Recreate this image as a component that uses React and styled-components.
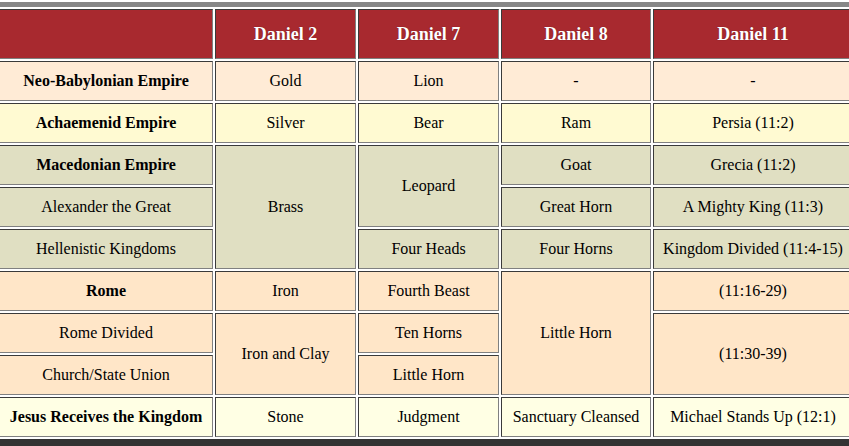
import React from "react";
import styled, { createGlobalStyle } from "styled-components";

const Global = createGlobalStyle`
  html, body { margin: 0; padding: 0; background: #ffffff; overflow: hidden; }
  body { font-family: "Liberation Serif", "Times New Roman", serif; }
`;

const Page = styled.div`
  width: 849px;
  height: 446px;
  overflow: hidden;
`;

const Table = styled.table`
  table-layout: fixed;
  width: 868px;
  margin: 2px 0 0 -8px;
  border-collapse: separate;
  border-spacing: 2px;
  border-style: solid;
  border-width: 5px 5px 10px 5px;
  border-color: #878787 #333333 #333333 #878787;
  background: #ffffff;
`;

const Cell = styled.td`
  box-sizing: border-box;
  height: 40px;
  padding: 0 4px;
  border-style: solid;
  border-width: 1px;
  border-color: #3a3a3a #808080 #808080 #3a3a3a;
  background: ${(p) => p.$bg};
  color: #000;
  font-size: 16px;
  font-weight: ${(p) => (p.$bold ? 700 : 400)};
  text-align: center;
  vertical-align: middle;
  white-space: nowrap;
`;

const Head = styled.th`
  box-sizing: border-box;
  height: 50px;
  width: ${(p) => p.$w}px;
  padding: 0 4px;
  border-style: solid;
  border-width: 1px;
  border-color: #3a3a3a #808080 #808080 #3a3a3a;
  background: #a8292f;
  color: #ffffff;
  font-size: 18px;
  font-weight: 700;
  text-align: center;
  vertical-align: middle;
  text-shadow: 0 0 1px rgba(60, 0, 0, 0.6);
`;

const C = {
  babylon: "#ffebd6",
  persia: "#fffad2",
  greece: "#e0dfc2",
  rome: "#ffe6c8",
  kingdom: "#ffffe4",
};

const headers = [
  { t: "", w: 214 },
  { t: "Daniel 2", w: 141 },
  { t: "Daniel 7", w: 141 },
  { t: "Daniel 8", w: 150 },
  { t: "Daniel 11", w: 200 },
];

const rows = [
  {
    bg: C.babylon,
    cells: [{ t: "Neo-Babylonian Empire", b: true }, { t: "Gold" }, { t: "Lion" }, { t: "-" }, { t: "-" }],
  },
  {
    bg: C.persia,
    cells: [{ t: "Achaemenid Empire", b: true }, { t: "Silver" }, { t: "Bear" }, { t: "Ram" }, { t: "Persia (11:2)" }],
  },
  {
    bg: C.greece,
    cells: [
      { t: "Macedonian Empire", b: true },
      { t: "Brass", rs: 3 },
      { t: "Leopard", rs: 2 },
      { t: "Goat" },
      { t: "Grecia (11:2)" },
    ],
  },
  {
    bg: C.greece,
    cells: [{ t: "Alexander the Great" }, { t: "Great Horn" }, { t: "A Mighty King (11:3)" }],
  },
  {
    bg: C.greece,
    cells: [{ t: "Hellenistic Kingdoms" }, { t: "Four Heads" }, { t: "Four Horns" }, { t: "Kingdom Divided (11:4-15)" }],
  },
  {
    bg: C.rome,
    cells: [
      { t: "Rome", b: true },
      { t: "Iron" },
      { t: "Fourth Beast" },
      { t: "Little Horn", rs: 3 },
      { t: "(11:16-29)" },
    ],
  },
  {
    bg: C.rome,
    cells: [{ t: "Rome Divided" }, { t: "Iron and Clay", rs: 2 }, { t: "Ten Horns" }, { t: "(11:30-39)", rs: 2 }],
  },
  {
    bg: C.rome,
    cells: [{ t: "Church/State Union" }, { t: "Little Horn" }],
  },
  {
    bg: C.kingdom,
    cells: [
      { t: "Jesus Receives the Kingdom", b: true },
      { t: "Stone" },
      { t: "Judgment" },
      { t: "Sanctuary Cleansed" },
      { t: "Michael Stands Up (12:1)" },
    ],
  },
];

export default function App() {
  return (
    <Page>
      <Global />
      <Table>
        <thead>
          <tr>
            {headers.map((h, i) => (
              <Head key={i} $w={h.w}>
                {h.t}
              </Head>
            ))}
          </tr>
        </thead>
        <tbody>
          {rows.map((r, i) => (
            <tr key={i}>
              {r.cells.map((c, j) => (
                <Cell key={j} $bg={r.bg} $bold={c.b} rowSpan={c.rs || 1}>
                  {c.t}
                </Cell>
              ))}
            </tr>
          ))}
        </tbody>
      </Table>
    </Page>
  );
}
